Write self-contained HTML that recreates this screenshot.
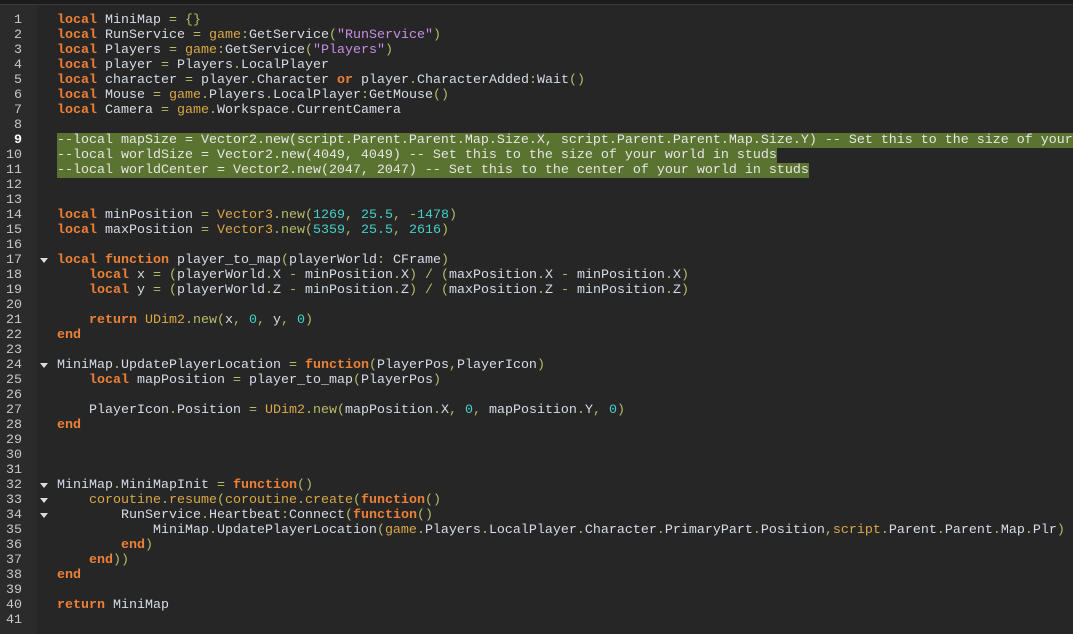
<!DOCTYPE html>
<html><head><style>
body{margin:0;width:1073px;height:634px;background:#262626;overflow:hidden;position:relative;font-family:"Liberation Mono",monospace;font-size:13.33px;}
#top{position:absolute;left:0;top:0;width:1073px;height:4px;background:#1c1c1c;border-bottom:1px solid #3a3a3a}
#gut{position:absolute;left:0;top:5px;width:37px;height:629px;background:#2b2b2b}
.ln,.cl,.ar{margin-top:1px}
.ln{position:absolute;left:0;width:22px;text-align:right;color:#c8c8c8;height:15px;line-height:15px}
.cl{position:absolute;left:57px;height:15px;line-height:15px;white-space:pre;color:#d6dde6}
.k{color:#ee8036;font-weight:bold}
.b{color:#d8a848}
.o{color:#b8bc66}
.s{color:#c78ee6}
.n{color:#45d0c8}
.hl{background:#5a7330;color:#e6e6e6}
.ar{position:absolute;left:40px;width:0;height:0;border-left:4px solid transparent;border-right:4px solid transparent;border-top:5px solid #ddd}
</style></head><body>
<div id="top"></div>
<div id="gut"></div>
<div class="ln" style="top:12px">1</div><div class="ln" style="top:27px">2</div><div class="ln" style="top:42px">3</div><div class="ln" style="top:57px">4</div><div class="ln" style="top:72px">5</div><div class="ln" style="top:87px">6</div><div class="ln" style="top:102px">7</div><div class="ln" style="top:117px">8</div><div class="ln" style="top:132px;font-weight:bold;color:#fff">9</div><div class="ln" style="top:147px">10</div><div class="ln" style="top:162px">11</div><div class="ln" style="top:177px">12</div><div class="ln" style="top:192px">13</div><div class="ln" style="top:207px">14</div><div class="ln" style="top:222px">15</div><div class="ln" style="top:237px">16</div><div class="ln" style="top:252px">17</div><div class="ln" style="top:267px">18</div><div class="ln" style="top:282px">19</div><div class="ln" style="top:297px">20</div><div class="ln" style="top:312px">21</div><div class="ln" style="top:327px">22</div><div class="ln" style="top:342px">23</div><div class="ln" style="top:357px">24</div><div class="ln" style="top:372px">25</div><div class="ln" style="top:387px">26</div><div class="ln" style="top:402px">27</div><div class="ln" style="top:417px">28</div><div class="ln" style="top:432px">29</div><div class="ln" style="top:447px">30</div><div class="ln" style="top:462px">31</div><div class="ln" style="top:477px">32</div><div class="ln" style="top:492px">33</div><div class="ln" style="top:507px">34</div><div class="ln" style="top:522px">35</div><div class="ln" style="top:537px">36</div><div class="ln" style="top:552px">37</div><div class="ln" style="top:567px">38</div><div class="ln" style="top:582px">39</div><div class="ln" style="top:597px">40</div><div class="ln" style="top:612px">41</div>
<div class="ar" style="top:257px"></div><div class="ar" style="top:362px"></div><div class="ar" style="top:482px"></div><div class="ar" style="top:497px"></div><div class="ar" style="top:512px"></div>
<div class="cl" style="top:12px"><span class="k">local</span> MiniMap <span class="o">= {}</span></div>
<div class="cl" style="top:27px"><span class="k">local</span> RunService <span class="o">=</span> <span class="b">game</span><span class="o">:</span>GetService<span class="o">(</span><span class="s">"RunService"</span><span class="o">)</span></div>
<div class="cl" style="top:42px"><span class="k">local</span> Players <span class="o">=</span> <span class="b">game</span><span class="o">:</span>GetService<span class="o">(</span><span class="s">"Players"</span><span class="o">)</span></div>
<div class="cl" style="top:57px"><span class="k">local</span> player <span class="o">=</span> Players<span class="o">.</span>LocalPlayer</div>
<div class="cl" style="top:72px"><span class="k">local</span> character <span class="o">=</span> player<span class="o">.</span>Character <span class="k">or</span> player<span class="o">.</span>CharacterAdded<span class="o">:</span>Wait<span class="o">()</span></div>
<div class="cl" style="top:87px"><span class="k">local</span> Mouse <span class="o">=</span> <span class="b">game</span><span class="o">.</span>Players<span class="o">.</span>LocalPlayer<span class="o">:</span>GetMouse<span class="o">()</span></div>
<div class="cl" style="top:102px"><span class="k">local</span> Camera <span class="o">=</span> <span class="b">game</span><span class="o">.</span>Workspace<span class="o">.</span>CurrentCamera</div>
<div class="cl hl" style="top:132px;width:1016px">--local mapSize = Vector2.new(script.Parent.Parent.Map.Size.X, script.Parent.Parent.Map.Size.Y) -- Set this to the size of your</div>
<div class="cl hl" style="top:147px">--local worldSize = Vector2.new(4049, 4049) -- Set this to the size of your world in studs</div>
<div class="cl hl" style="top:162px">--local worldCenter = Vector2.new(2047, 2047) -- Set this to the center of your world in studs</div>
<div class="cl" style="top:207px"><span class="k">local</span> minPosition <span class="o">=</span> <span class="b">Vector3</span><span class="o">.new(</span><span class="n">1269</span><span class="o">,</span> <span class="n">25.5</span><span class="o">,</span> <span class="o">-</span><span class="n">1478</span><span class="o">)</span></div>
<div class="cl" style="top:222px"><span class="k">local</span> maxPosition <span class="o">=</span> <span class="b">Vector3</span><span class="o">.new(</span><span class="n">5359</span><span class="o">,</span> <span class="n">25.5</span><span class="o">,</span> <span class="n">2616</span><span class="o">)</span></div>
<div class="cl" style="top:252px"><span class="k">local</span> <span class="k">function</span> player_to_map<span class="o">(</span>playerWorld<span class="o">:</span> CFrame<span class="o">)</span></div>
<div class="cl" style="top:267px">    <span class="k">local</span> x <span class="o">= (</span>playerWorld<span class="o">.</span>X <span class="o">-</span> minPosition<span class="o">.</span>X<span class="o">) / (</span>maxPosition<span class="o">.</span>X <span class="o">-</span> minPosition<span class="o">.</span>X<span class="o">)</span></div>
<div class="cl" style="top:282px">    <span class="k">local</span> y <span class="o">= (</span>playerWorld<span class="o">.</span>Z <span class="o">-</span> minPosition<span class="o">.</span>Z<span class="o">) / (</span>maxPosition<span class="o">.</span>Z <span class="o">-</span> minPosition<span class="o">.</span>Z<span class="o">)</span></div>
<div class="cl" style="top:312px">    <span class="k">return</span> <span class="b">UDim2</span><span class="o">.new(</span>x<span class="o">,</span> <span class="n">0</span><span class="o">,</span> y<span class="o">,</span> <span class="n">0</span><span class="o">)</span></div>
<div class="cl" style="top:327px"><span class="k">end</span></div>
<div class="cl" style="top:357px">MiniMap<span class="o">.</span>UpdatePlayerLocation <span class="o">=</span> <span class="k">function</span><span class="o">(</span>PlayerPos<span class="o">,</span>PlayerIcon<span class="o">)</span></div>
<div class="cl" style="top:372px">    <span class="k">local</span> mapPosition <span class="o">=</span> player_to_map<span class="o">(</span>PlayerPos<span class="o">)</span></div>
<div class="cl" style="top:402px">    PlayerIcon<span class="o">.</span>Position <span class="o">=</span> <span class="b">UDim2</span><span class="o">.new(</span>mapPosition<span class="o">.</span>X<span class="o">,</span> <span class="n">0</span><span class="o">,</span> mapPosition<span class="o">.</span>Y<span class="o">,</span> <span class="n">0</span><span class="o">)</span></div>
<div class="cl" style="top:417px"><span class="k">end</span></div>
<div class="cl" style="top:477px">MiniMap<span class="o">.</span>MiniMapInit <span class="o">=</span> <span class="k">function</span><span class="o">()</span></div>
<div class="cl" style="top:492px">    <span class="b">coroutine</span><span class="o">.</span><span class="b">resume</span><span class="o">(</span><span class="b">coroutine</span><span class="o">.</span><span class="b">create</span><span class="o">(</span><span class="k">function</span><span class="o">()</span></div>
<div class="cl" style="top:507px">        RunService<span class="o">.</span>Heartbeat<span class="o">:</span>Connect<span class="o">(</span><span class="k">function</span><span class="o">()</span></div>
<div class="cl" style="top:522px">            MiniMap<span class="o">.</span>UpdatePlayerLocation<span class="o">(</span><span class="b">game</span><span class="o">.</span>Players<span class="o">.</span>LocalPlayer<span class="o">.</span>Character<span class="o">.</span>PrimaryPart<span class="o">.</span>Position<span class="o">,</span><span class="b">script</span><span class="o">.</span>Parent<span class="o">.</span>Parent<span class="o">.</span>Map<span class="o">.</span>Plr<span class="o">)</span></div>
<div class="cl" style="top:537px">        <span class="k">end</span><span class="o">)</span></div>
<div class="cl" style="top:552px">    <span class="k">end</span><span class="o">))</span></div>
<div class="cl" style="top:567px"><span class="k">end</span></div>
<div class="cl" style="top:597px"><span class="k">return</span> MiniMap</div>
</body></html>
